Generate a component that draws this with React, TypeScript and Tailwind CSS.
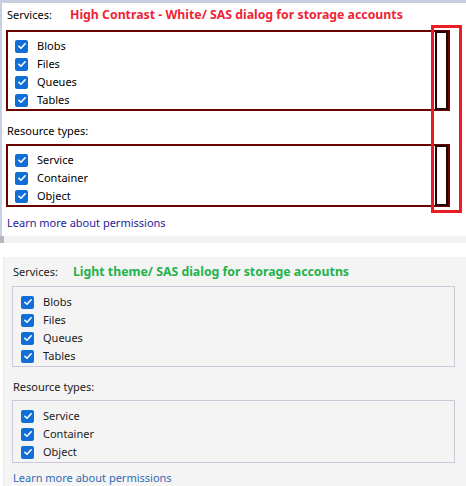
const services = ["Blobs", "Files", "Queues", "Tables"];
const resources = ["Service", "Container", "Object"];

const Check = () => (
  <span className="flex h-[13px] w-[13px] shrink-0 items-center justify-center rounded-[2px] bg-[#0f6fd6]">
    <svg viewBox="0 0 12 12" className="h-[10px] w-[10px]" fill="none">
      <path d="M2.2 6.3 4.7 8.7 9.8 3.3" stroke="white" strokeWidth="1.9" strokeLinecap="round" strokeLinejoin="round" />
    </svg>
  </span>
);

const Row = ({ label, gap }: { label: string; gap: string }) => (
  <div className={`flex h-[18px] items-center ${gap}`}>
    <Check />
    <span>{label}</span>
  </div>
);

const HcBox = ({ items, h }: { items: string[]; h: string }) => (
  <div className={`flex ${h} w-[444px] border-2 border-[#6b0000]`}>
    <div className="flex-1 pl-[7px] pt-[5px]">
      {items.map((i) => (
        <Row key={i} label={i} gap="gap-[9px]" />
      ))}
    </div>
    <div className="my-[-1px] w-[13px] border-2 border-[#2a0000] bg-white" />
  </div>
);

const LightBox = ({ items, h }: { items: string[]; h: string }) => (
  <div className={`${h} w-[443px] border border-[#cbc9d8] pl-[8px] pt-[6px]`}>
    {items.map((i) => (
      <Row key={i} label={i} gap="gap-[9px]" />
    ))}
  </div>
);

export default function App() {
  return (
    <div className="relative h-[486px] w-[466px] overflow-hidden bg-white font-['Segoe_UI','Noto_Sans',sans-serif] text-[11px] leading-[18px] text-[#1b1b1b]">
      {/* high contrast section */}
      <div className="h-[236px] border-l-2 border-t-[3px] border-[#c6d0e1] pl-[4px] pt-[3px] text-black">
        <div className="flex h-[18px] items-center">
          <span className="w-[64px] pl-[1px]">Services:</span>
          <span className="text-[12.3px] font-bold text-[#ee2436]">
            High Contrast - White/ SAS dialog for storage accounts
          </span>
        </div>
        <div className="mt-[6px]">
          <HcBox items={services} h="h-[81px]" />
        </div>
        <div className="mt-[11px] pl-[1px]">Resource types:</div>
        <div className="mt-[4px]">
          <HcBox items={resources} h="h-[63px]" />
        </div>
        <div className="mt-[7px] pl-[1px] text-[#23239a]">Learn more about permissions</div>
      </div>

      <div className="relative h-[7px] bg-[#f3f3f3]">
        <div className="h-full w-[4px] bg-[#b6b6be]" />
      </div>
      <div className="h-[14px] bg-white" />

      {/* light theme section */}
      <div className="ml-[3px] h-[229px] border-l border-[#ebebeb] bg-[#f4f4f4] pl-[8px] pt-[6px]">
        <div className="flex h-[18px] items-center">
          <span className="w-[61px] pl-[1px]">Services:</span>
          <span className="text-[12.3px] font-bold text-[#24b24a]">
            Light theme/ SAS dialog for storage accoutns
          </span>
        </div>
        <div className="mt-[5px]">
          <LightBox items={services} h="h-[81px]" />
        </div>
        <div className="mt-[11px] pl-[1px]">Resource types:</div>
        <div className="mt-[4px]">
          <LightBox items={resources} h="h-[63px]" />
        </div>
        <div className="mt-[6px] pl-[1px] text-[#2f6cb4]">Learn more about permissions</div>
      </div>

      {/* annotation highlight */}
      <div className="absolute left-[431px] top-[25px] h-[188px] w-[31px] border-[3px] border-[#ec1c24]" />
    </div>
  );
}
